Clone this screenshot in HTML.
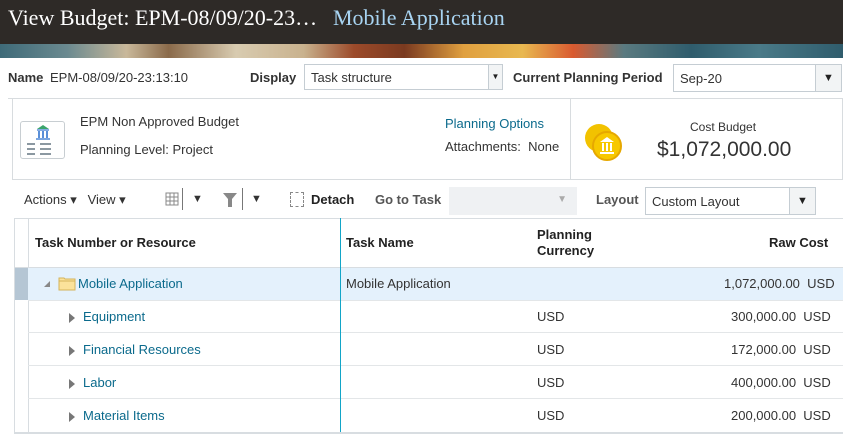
<!DOCTYPE html>
<html><head><meta charset="utf-8"><style>
*{margin:0;padding:0;box-sizing:border-box}
body{width:843px;height:434px;overflow:hidden;background:#fff;font-family:"Liberation Sans",Arial,sans-serif;font-size:13px;color:#333;position:relative}
.a{position:absolute;white-space:nowrap}
.hdr{left:0;top:0;width:843px;height:44px;background:#2e2a27}
.strip{left:0;top:44px;width:843px;height:14px;background:linear-gradient(90deg,#3e6a78 0,#6b8a90 8%,#c9b89a 15%,#8a6a4a 20%,#d8cbb0 28%,#c9b28e 36%,#9c4a2a 42%,#7a3a20 48%,#e0a040 55%,#e8b850 62%,#d95a30 68%,#5a7a80 74%,#2f5c6c 82%,#4a7a88 90%,#2f5c6c 100%)}
.b{font-weight:bold}
.link{color:#0b6a8c}
.sel{border:1px solid #c5cdd3;background:#fff;height:26px}
.dd{position:absolute;right:0;top:0;width:26px;height:24px;border-left:1px solid #c5cdd3;background:#f2f4f5;font-size:11px;text-align:center;line-height:24px;color:#222}
.row{left:28px;width:815px;height:33px;border-bottom:1px solid #e3e6e8}
.tri{display:inline-block;width:0;height:0;border-top:5px solid transparent;border-bottom:5px solid transparent;border-left:6px solid #777}
</style></head><body>
<div class="a hdr"></div>
<div class="a" style="left:8px;top:5px;font-family:'Liberation Serif',serif;font-size:22px;color:#fff">View Budget: EPM-08/09/20-23…</div>
<div class="a" style="left:333px;top:5px;font-family:'Liberation Serif',serif;font-size:22px;color:#a8d4f2">Mobile Application</div>
<div class="a strip"></div>

<div class="a b" style="left:8px;top:70px">Name</div>
<div class="a" style="left:50px;top:70px">EPM-08/09/20-23:13:10</div>
<div class="a b" style="left:250px;top:70px">Display</div>
<div class="a sel" style="left:304px;top:64px;width:199px"><span class="a" style="left:6px;top:5px">Task structure</span><div class="dd" style="width:14px;font-size:8px">▼</div></div>
<div class="a b" style="left:513px;top:70px">Current Planning Period</div>
<div class="a sel" style="left:673px;top:64px;width:169px;height:28px"><span class="a" style="left:6px;top:6px">Sep-20</span><div class="dd" style="height:26px;line-height:26px">▼</div></div>
<div class="a" style="left:8px;top:98px;width:835px;border-top:1px solid #d8dcdf"></div>

<div class="a" style="left:12px;top:98px;width:831px;height:82px;border:1px solid #d8dcdf;border-top:none"></div>
<div class="a" style="left:570px;top:98px;height:82px;border-left:1px solid #d8dcdf"></div>
<div class="a" style="left:20px;top:121px;width:45px;height:38px;border:1px solid #c8ced2;border-radius:3px;background:#fff"></div>
<svg class="a" style="left:20px;top:121px" width="45" height="38"><path d="M23 4l-6 4h12z" fill="#3ba46c"/><path d="M17 9h12" stroke="#5a8fd8" stroke-width="1.5"/><path d="M19 10v7M23 10v7M27 10v7" stroke="#5a8fd8" stroke-width="2"/><path d="M16 18h14" stroke="#5a8fd8" stroke-width="1.6"/><path d="M7 23h8M20 23h11M7 28h8M20 28h11M7 33h8M20 33h11" stroke="#7b8a94" stroke-width="1.8"/></svg>
<div class="a" style="left:80px;top:114px">EPM Non Approved Budget</div>
<div class="a" style="left:80px;top:142px">Planning Level: Project</div>
<div class="a link" style="left:445px;top:116px">Planning Options</div>
<div class="a" style="left:445px;top:139px">Attachments:&nbsp;&nbsp;None</div>
<div class="a" style="left:585px;top:124px;width:28px;height:28px;border-radius:50%;background:#f2c200"></div>
<div class="a" style="left:592px;top:131px;width:30px;height:30px;border-radius:50%;background:#f7c800;border:2px solid #e6a800"></div>
<svg class="a" style="left:598px;top:136px" width="18" height="20"><path d="M9 1L2 6h14z" fill="#fff"/><path d="M5 7v8M9 7v8M13 7v8" stroke="#fff" stroke-width="2"/><path d="M2 17h14" stroke="#fff" stroke-width="2"/></svg>
<div class="a" style="left:690px;top:120px;font-size:12px">Cost Budget</div>
<div class="a" style="left:657px;top:138px;font-size:21px">$1,072,000.00</div>

<div class="a" style="left:24px;top:192px">Actions ▾&nbsp;&nbsp; View ▾</div>
<svg class="a" style="left:162px;top:191px" width="20" height="18"><path d="M4 2h12v12H4zM4 6h12M4 10h12M8 2v12M12 2v12" stroke="#888" fill="none"/></svg>
<div class="a" style="left:182px;top:188px;height:22px;border-left:1px solid #777"></div>
<div class="a" style="left:192px;top:193px;font-size:11px">▼</div>
<svg class="a" style="left:222px;top:192px" width="16" height="16"><path d="M1 1h14l-5 6v8H6V7z" fill="#888"/></svg>
<div class="a" style="left:242px;top:188px;height:22px;border-left:1px solid #777"></div>
<div class="a" style="left:251px;top:193px;font-size:11px">▼</div>
<div class="a" style="left:290px;top:192px;width:14px;height:15px;border:1px dashed #888"></div>
<div class="a b" style="left:311px;top:192px;color:#222">Detach</div>
<div class="a b" style="left:375px;top:192px;color:#555">Go to Task</div>
<div class="a" style="left:449px;top:187px;width:128px;height:28px;background:#eff1f3"><span class="a" style="right:10px;top:7px;color:#aaa;font-size:10px">▼</span></div>
<div class="a b" style="left:596px;top:192px;color:#555">Layout</div>
<div class="a sel" style="left:645px;top:187px;width:171px;height:28px"><span class="a" style="left:6px;top:6px">Custom Layout</span><div class="dd" style="height:26px;line-height:26px">▼</div></div>

<div class="a" style="left:14px;top:218px;width:829px;height:216px;border-left:1px solid #d8dde1;border-top:1px solid #d8dde1"></div>
<div class="a" style="left:28px;top:218px;height:214px;border-left:1px solid #d8dde1"></div>
<div class="a" style="left:14px;top:432px;width:829px;border-top:2px solid #d8dde1"></div>
<div class="a b" style="left:35px;top:235px;color:#222">Task Number or Resource</div>
<div class="a b" style="left:346px;top:235px;color:#222">Task Name</div>
<div class="a b" style="left:537px;top:227px;color:#222;line-height:16px">Planning<br>Currency</div>
<div class="a b" style="left:769px;top:235px;color:#222">Raw Cost</div>
<div class="a" style="left:14px;top:267px;width:829px;border-top:1px solid #d8dde1"></div>

<div class="a row" style="top:268px;background:#e4f1fc;border-bottom-color:#e3e6e8"></div>
<div class="a" style="left:15px;top:268px;width:13px;height:32px;background:#b5c6d4"></div>
<div class="a" style="left:44px;top:281px;width:0;height:0;border-left:6px solid transparent;border-bottom:6px solid #888"></div>
<svg class="a" style="left:58px;top:276px" width="18" height="15"><path d="M1 2h5l1 1h10v11H1z" fill="#fbe29a" stroke="#d4b45a"/><path d="M1 5h16" stroke="#d4b45a"/></svg>
<div class="a link" style="left:78px;top:276px">Mobile Application</div>
<div class="a" style="left:346px;top:276px">Mobile Application</div>
<div class="a" style="left:724px;top:276px">1,072,000.00&nbsp;&nbsp;USD</div>

<div class="a row" style="top:300px"></div>
<div class="a row" style="top:333px"></div>
<div class="a row" style="top:366px"></div>
<div class="a row" style="top:399px;border-bottom:none"></div>

<div class="a" style="left:69px;top:311px"><span class="tri"></span></div>
<div class="a link" style="left:83px;top:309px">Equipment</div>
<div class="a" style="left:537px;top:309px">USD</div>
<div class="a" style="left:731px;top:309px">300,000.00&nbsp;&nbsp;USD</div>

<div class="a" style="left:69px;top:344px"><span class="tri"></span></div>
<div class="a link" style="left:83px;top:342px">Financial Resources</div>
<div class="a" style="left:537px;top:342px">USD</div>
<div class="a" style="left:731px;top:342px">172,000.00&nbsp;&nbsp;USD</div>

<div class="a" style="left:69px;top:377px"><span class="tri"></span></div>
<div class="a link" style="left:83px;top:375px">Labor</div>
<div class="a" style="left:537px;top:375px">USD</div>
<div class="a" style="left:731px;top:375px">400,000.00&nbsp;&nbsp;USD</div>

<div class="a" style="left:69px;top:410px"><span class="tri"></span></div>
<div class="a link" style="left:83px;top:408px">Material Items</div>
<div class="a" style="left:537px;top:408px">USD</div>
<div class="a" style="left:731px;top:408px">200,000.00&nbsp;&nbsp;USD</div>

<div class="a" style="left:340px;top:218px;height:214px;border-left:1px solid #12a5c8"></div>
</body></html>
